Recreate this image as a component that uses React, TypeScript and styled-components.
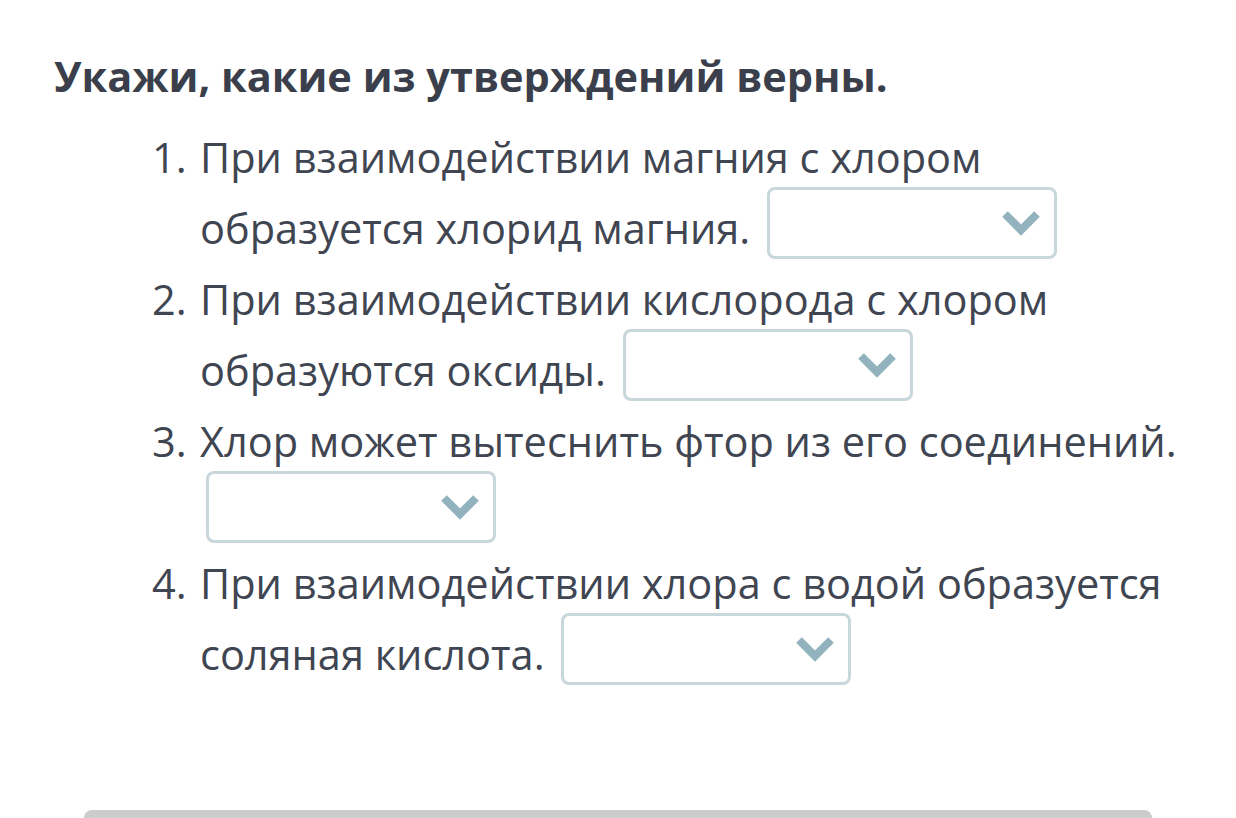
import styled, { createGlobalStyle } from "styled-components";

const GlobalStyle = createGlobalStyle`
  html, body {
    margin: 0;
    padding: 0;
    background: #ffffff;
  }
  body {
    font-family: "Open Sans", "Noto Sans", sans-serif;
    color: #3e4450;
  }
`;

const Page = styled.main`
  position: relative;
  width: 1236px;
  height: 818px;
  overflow: hidden;
  box-sizing: border-box;
  padding: 46px 0 0 54px;
`;

const Title = styled.h1`
  margin: 0;
  font-size: 41.5px;
  font-weight: 700;
  line-height: 60px;
  color: #3a3f4b;
`;

const List = styled.ol`
  margin: 16px 0 0 0;
  padding-left: 146px;
  width: 985px;
  font-size: 41.5px;
  line-height: 71px;
  color: #3f4551;
  list-style: none;
  counter-reset: item;
`;

const Item = styled.li`
  counter-increment: item;

  &::before {
    content: counter(item) ".";
    display: inline-block;
    width: 48px;
    margin-left: -48px;
  }
`;

const SelectBox = styled.span`
  display: inline-block;
  box-sizing: border-box;
  width: 290px;
  height: 72px;
  margin: -10px 0 0 6px;
  border: 3px solid #c7d7dc;
  border-radius: 8px;
  background: #ffffff;
  vertical-align: -15px;

  svg {
    display: block;
    margin: 21px 14px 0 auto;
  }
`;

const Chevron = () => (
  <svg width="38" height="26" viewBox="0 0 38 26">
    <polyline
      points="3,3 19,19 35,3"
      fill="none"
      stroke="#92b3be"
      strokeWidth="8"
      strokeLinejoin="miter"
      strokeLinecap="butt"
    />
  </svg>
);

const Select = () => (
  <SelectBox role="combobox">
    <Chevron />
  </SelectBox>
);

const BottomBar = styled.div`
  position: absolute;
  left: 84px;
  width: 1068px;
  bottom: 0;
  height: 8px;
  background: #cccccc;
  border-radius: 8px 8px 0 0;
`;

const items = [
  "При взаимодействии магния с хлором образуется хлорид магния.",
  "При взаимодействии кислорода с хлором образуются оксиды.",
  "Хлор может вытеснить фтор из его соединений.",
  "При взаимодействии хлора с водой образуется соляная кислота.",
];

export default function App() {
  return (
    <>
      <GlobalStyle />
      <Page>
        <Title>Укажи, какие из утверждений верны.</Title>
        <List>
          {items.map((text) => (
            <Item key={text}>
              {text} <Select />
            </Item>
          ))}
        </List>
        <BottomBar />
      </Page>
    </>
  );
}
